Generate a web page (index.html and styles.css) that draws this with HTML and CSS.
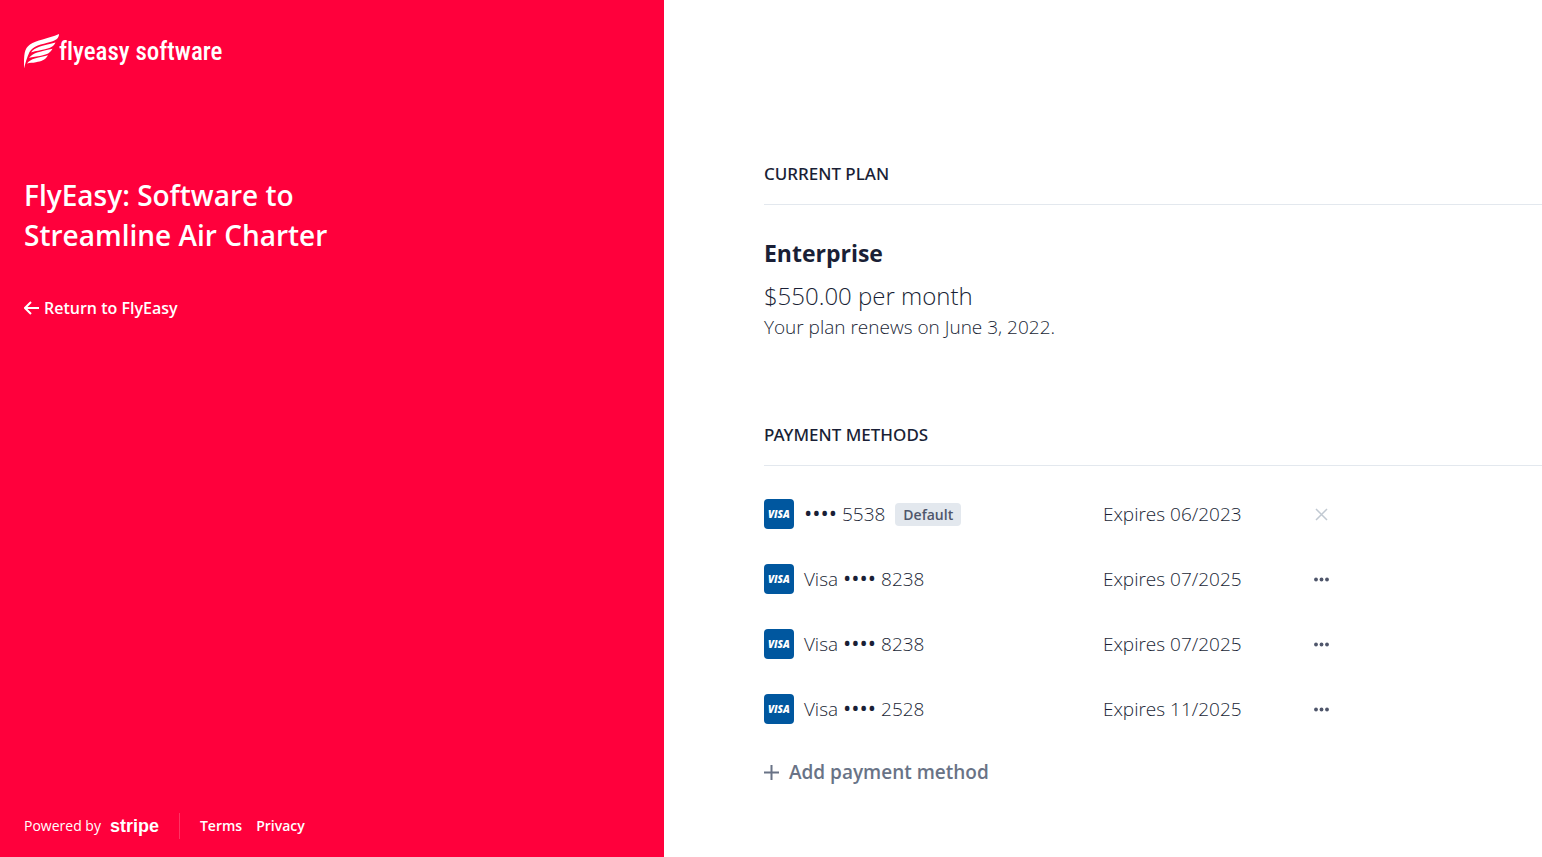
FILE: index.html
```html
<!DOCTYPE html>
<html lang="en">
<head>
  <meta charset="utf-8">
  <meta name="viewport" content="width=device-width, initial-scale=1">
  <title>FlyEasy billing</title>
  <link rel="stylesheet" href="styles.css">
</head>
<body>
  <div class="page">
    <aside class="sidebar">
      <a class="logo" href="#">
        <svg class="logo-wing" viewBox="0 0 35 35" aria-hidden="true">
          <path d="M0 34.500C0 20 0 15 6 10.500C12 6 24 5 35 0C35 4 32 6.500 27 7.800C17 10.500 9 12 5.500 18C3 23 1.500 29 0 34.500Z" />
          <path d="M7 18.500C10 13.500 18 11.800 31.500 8.500C29.500 13 26 14 21 15.200C14 17 10 17 7 18.500Z" />
          <path d="M5 24C9 18.800 15 18 28.500 14.800C26 19.500 23 20.300 18 21.500C12 23 9 22.500 5 24Z" />
          <path d="M3 29.500C7 24.500 13 24 24 21.300C21 26.500 17 27.200 12 28.200C8 29 6 28.500 3 29.500Z" />
        </svg>
        <span class="logo-text">flyeasy software</span>
      </a>
      <h1 class="headline">FlyEasy: Software to Streamline Air Charter</h1>
      <a class="return-link" href="#">
        <svg class="arrow" viewBox="0 0 15 14" aria-hidden="true">
          <path d="M7 1L1 7l6 6M1 7h14" />
        </svg>
        Return to FlyEasy
      </a>
      <footer class="footer">
        <a class="powered" href="#">Powered by <span class="stripe">stripe</span></a>
        <nav class="footer-links">
          <a href="#">Terms</a>
          <a href="#">Privacy</a>
        </nav>
      </footer>
    </aside>

    <main class="content">
      <section class="plan">
        <h2 class="section-title">Current plan</h2>
        <h3 class="plan-name">Enterprise</h3>
        <p class="plan-price">$550.00 per month</p>
        <p class="plan-renews">Your plan renews on June 3, 2022.</p>
      </section>

      <section class="payments">
        <h2 class="section-title">Payment methods</h2>
        <ul class="cards">
          <li class="card-row">
            <div class="card">
              <span class="visa">VISA</span>
              <span class="number"><span class="dots">••••</span> 5538</span>
              <span class="badge">Default</span>
            </div>
            <span>Expires 06/2023</span>
            <button class="icon-button" type="button" aria-label="Remove card 5538" disabled>
              <svg class="icon" viewBox="0 0 15 15" aria-hidden="true">
                <path class="cross" d="M2 2l11 11M13 2L2 13" />
              </svg>
            </button>
          </li>
          <li class="card-row">
            <div class="card">
              <span class="visa">VISA</span>
              <span class="number">Visa <span class="dots">••••</span> 8238</span>
            </div>
            <span>Expires 07/2025</span>
            <button class="icon-button" type="button" aria-label="Options for card 8238">
              <svg class="icon" viewBox="0 0 15 15" aria-hidden="true">
                <circle cx="2" cy="7.500" r="1.900" /><circle cx="7.500" cy="7.500" r="1.900" /><circle cx="13" cy="7.500" r="1.900" />
              </svg>
            </button>
          </li>
          <li class="card-row">
            <div class="card">
              <span class="visa">VISA</span>
              <span class="number">Visa <span class="dots">••••</span> 8238</span>
            </div>
            <span>Expires 07/2025</span>
            <button class="icon-button" type="button" aria-label="Options for card 8238">
              <svg class="icon" viewBox="0 0 15 15" aria-hidden="true">
                <circle cx="2" cy="7.500" r="1.900" /><circle cx="7.500" cy="7.500" r="1.900" /><circle cx="13" cy="7.500" r="1.900" />
              </svg>
            </button>
          </li>
          <li class="card-row">
            <div class="card">
              <span class="visa">VISA</span>
              <span class="number">Visa <span class="dots">••••</span> 2528</span>
            </div>
            <span>Expires 11/2025</span>
            <button class="icon-button" type="button" aria-label="Options for card 2528">
              <svg class="icon" viewBox="0 0 15 15" aria-hidden="true">
                <circle cx="2" cy="7.500" r="1.900" /><circle cx="7.500" cy="7.500" r="1.900" /><circle cx="13" cy="7.500" r="1.900" />
              </svg>
            </button>
          </li>
        </ul>
        <button class="add-button" type="button">
          <svg class="icon" viewBox="0 0 15 15" aria-hidden="true">
            <path class="plus" d="M7.500 0v15M0 7.500h15" />
          </svg>
          Add payment method
        </button>
      </section>
    </main>
  </div>
</body>
</html>
```
FILE: styles.css
```css
* {
  box-sizing: border-box;
  margin: 0;
  padding: 0;
}

body {
  font-family: "Segoe UI", "Open Sans", "Noto Sans", sans-serif;
  color: #1a1f36;
  background-color: #fff;
}

button {
  font-family: inherit;
  border: none;
  background: none;
  cursor: pointer;
}

.page {
  display: grid;
  grid-template-columns: 31fr 41fr;
  min-height: 100vh;
}

/* Brand column */
.sidebar {
  display: flex;
  flex-direction: column;
  align-items: flex-start;
  padding: 34px 24px 18px;
  background-color: #ff003c;
  color: #fff;
}

.sidebar a {
  color: #fff;
  text-decoration: none;
}

.logo {
  display: flex;
  align-items: center;
  height: 35px;
}

.logo-wing {
  width: 35px;
  height: 35px;
  fill: #fff;
}

.logo-text {
  font-family: "Roboto Condensed", Roboto, sans-serif;
  font-size: 25px;
  font-weight: 500;
  font-variant-ligatures: none;
  line-height: 32px;
}

.headline {
  max-width: 320px;
  margin-top: 106px;
  font-size: 28px;
  font-weight: 600;
  line-height: 40px;
}

.return-link {
  display: flex;
  align-items: center;
  gap: 5px;
  margin-top: 41px;
  font-size: 16px;
  font-weight: 600;
  line-height: 24px;
}

.arrow {
  width: 15px;
  height: 14px;
  fill: none;
  stroke: #fff;
  stroke-width: 2;
}

.footer {
  display: flex;
  align-items: center;
  margin-top: auto;
  font-size: 14px;
  line-height: 26px;
}

.powered {
  display: flex;
  align-items: center;
  gap: 9px;
  padding-right: 20px;
  border-right: 1px solid #ff3363;
}

.stripe {
  font-family: "Liberation Sans", Arial, sans-serif;
  font-size: 18px;
  font-weight: 700;
}

.footer-links {
  display: flex;
  gap: 14px;
  padding-left: 20px;
  font-weight: 600;
}

/* Billing column */
.content {
  padding: 160px 0 60px 100px;
}

.section-title {
  padding-bottom: 16px;
  border-bottom: 1px solid #e3e8ee;
  font-family: "Segoe UI", "Noto Sans", sans-serif;
  font-size: 17px;
  font-weight: 500;
  line-height: 28px;
  text-transform: uppercase;
}

.plan-name {
  margin-top: 32px;
  font-size: 23px;
  font-weight: 700;
  line-height: 32px;
}

.plan-price {
  margin-top: 10px;
  font-size: 24px;
  font-weight: 300;
  line-height: 34px;
}

.plan-renews {
  font-size: 19px;
  font-weight: 300;
  line-height: 28px;
}

.payments {
  margin-top: 80px;
}

.cards {
  display: grid;
  gap: 35px;
  margin-top: 33px;
  list-style: none;
}

.card-row {
  display: grid;
  grid-template-columns: 339px 211px auto;
  align-items: center;
  justify-content: start;
  height: 30px;
  font-size: 19px;
  font-weight: 300;
  line-height: 30px;
}

.card {
  display: flex;
  align-items: center;
  gap: 10px;
}

.visa {
  width: 30px;
  border-radius: 4px;
  background-color: #00579f;
  color: #fff;
  font-size: 10px;
  font-style: italic;
  font-weight: 800;
  line-height: 30px;
  text-align: center;
}

.dots {
  font-size: 22px;
  font-weight: 400;
  line-height: 1;
}

.badge {
  padding: 0 8px;
  border-radius: 4px;
  background-color: #e3e8ee;
  color: #4f566b;
  font-size: 14px;
  font-weight: 600;
  line-height: 23px;
}

.icon {
  display: block;
  width: 15px;
  height: 15px;
  fill: #4f566b;
}

.cross {
  stroke: #c1c9d2;
  stroke-width: 1.500;
}

.plus {
  stroke: #697386;
  stroke-width: 2;
}

.add-button {
  display: flex;
  align-items: center;
  gap: 10px;
  margin-top: 34px;
  color: #697386;
  font-size: 19px;
  font-weight: 600;
  line-height: 28px;
}
```
